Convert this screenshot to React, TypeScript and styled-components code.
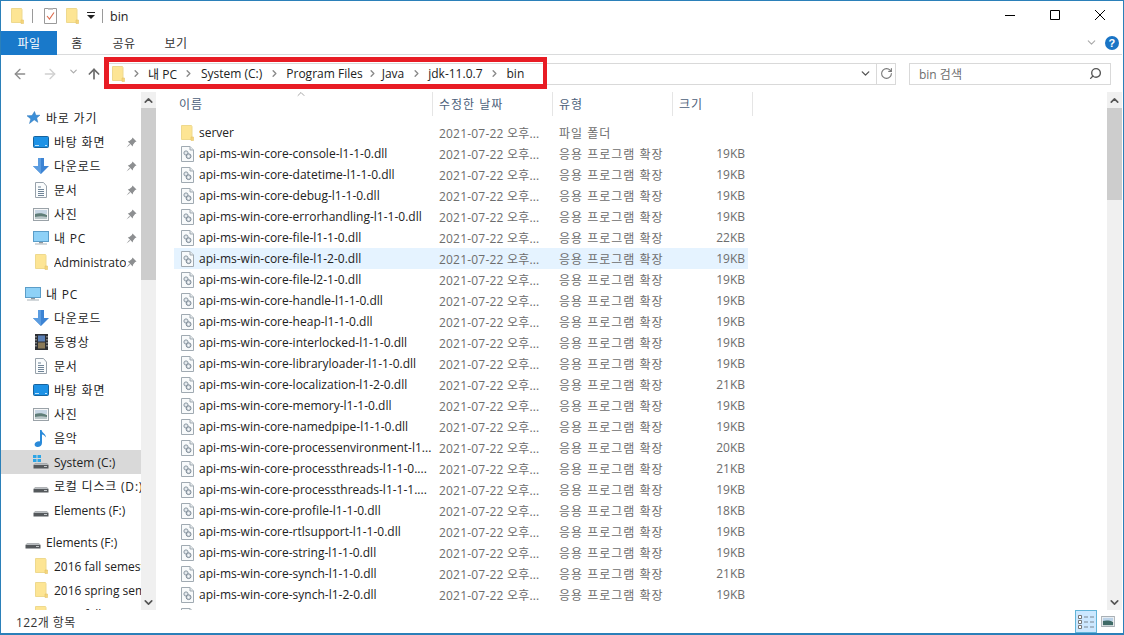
import React from "react";
import styled, { createGlobalStyle } from "styled-components";
import { ArrowLeft, ArrowRight, ArrowUp, ChevronDown, ChevronRight, ChevronUp, RotateCw, Search } from "lucide-react";

const GlobalStyle = createGlobalStyle`
  html, body { margin: 0; padding: 0; height: 635px; overflow: hidden; background: #fff; }
  body { font-family: "Open Sans", "Noto Sans CJK KR", sans-serif; font-size: 12px; color: #1e1e1e; }
  * { box-sizing: border-box; }
`;

const Window = styled.div`
  width: 1124px;
  height: 635px;
  display: flex;
  flex-direction: column;
  border: 1px solid #2b80b9;
  border-bottom-width: 2px;
  padding-right: 1px;
  background: #fff;
`;

/* title bar */
const TitleBar = styled.div`
  height: 30px;
  flex: none;
  display: flex;
  align-items: center;
  padding-left: 10px;
`;
const QuickSlot = styled.div<{ $w: number }>`
  width: ${(p) => p.$w}px;
  flex: none;
  display: flex;
  align-items: center;
`;
const VBar = styled.div`
  width: 1px;
  height: 14px;
  background: #9a9a9a;
  flex: none;
`;
const TitleText = styled.span`
  margin-left: 7px;
  font-size: 12.5px;
  color: #222;
`;
const WinControls = styled.div`
  margin-left: auto;
  display: flex;
  align-items: center;
  margin-right: 17px;
  margin-bottom: 2px;
  gap: 35px;
`;

/* ribbon tabs */
const RibbonTabs = styled.div`
  height: 24px;
  flex: none;
  display: flex;
  align-items: stretch;
  border-bottom: 1px solid #dadbdc;
  position: relative;
  letter-spacing: 0.5px;
`;
const FileTab = styled.div`
  width: 56px;
  background: #1979ca;
  color: #fff;
  display: flex;
  align-items: center;
  justify-content: center;
  margin-bottom: -1px;
`;
const RibbonTab = styled.div<{ $w: number }>`
  width: ${(p) => p.$w}px;
  display: flex;
  align-items: center;
  justify-content: center;
  color: #333;
`;
const RibbonRight = styled.div`
  margin-left: auto;
  display: flex;
  align-items: center;
  gap: 7px;
  padding-right: 3px;
`;
const HelpBadge = styled.div`
  width: 14px;
  height: 14px;
  border-radius: 50%;
  background: #1a74c5;
  color: #fff;
  font: bold 11px/14px "Liberation Sans", sans-serif;
  text-align: center;
`;

/* address row */
const AddressRow = styled.div`
  height: 37px;
  flex: none;
  display: flex;
  align-items: center;
  position: relative;
  padding-right: 11px;
`;
const NavSlot = styled.div<{ $w: number; $c: string }>`
  width: ${(p) => p.$w}px;
  flex: none;
  display: flex;
  justify-content: center;
  color: ${(p) => p.$c};
`;
const NavGroup = styled.div`
  width: 103px;
  flex: none;
  display: flex;
  padding-left: 4px;
`;
const AddressBox = styled.div`
  width: 792px;
  height: 22px;
  flex: none;
  border: 1px solid #d9d9d9;
  display: flex;
  align-items: center;
  padding-left: 7px;
`;
const Crumbs = styled.div`
  flex: 1;
  display: flex;
  align-items: center;
`;
const CrumbSep = styled.span<{ $w: number }>`
  width: ${(p) => p.$w}px;
  flex: none;
  display: flex;
  justify-content: center;
  color: #8a8a8a;
`;
const Crumb = styled.span`
  white-space: nowrap;
  color: #222;
`;
const DropBtn = styled.div`
  width: 17px;
  height: 100%;
  display: flex;
  align-items: center;
  justify-content: center;
  padding-right: 4px;
  color: #555;
`;
const RefreshBtn = styled.div`
  width: 19px;
  height: 100%;
  display: flex;
  align-items: center;
  justify-content: center;
  border-left: 1px solid #d9d9d9;
  color: #777;
`;
const SearchBox = styled.div`
  margin-left: 13px;
  flex: 1;
  height: 22px;
  border: 1px solid #d9d9d9;
  display: flex;
  align-items: center;
  padding: 0 8px 0 9px;
  color: #6d6d6d;
  justify-content: space-between;
`;
const MirroredSearch = styled(Search)`
  transform: scaleX(-1);
  color: #555;
`;
const RedFrame = styled.div`
  position: absolute;
  left: 103px;
  top: 2px;
  width: 443px;
  height: 32px;
  border: 5px solid #e81c24;
  border-right-width: 4px;
  pointer-events: none;
`;

/* main */
const Main = styled.div`
  flex: 1;
  min-height: 0;
  display: flex;
`;
const Sidebar = styled.nav`
  width: 140px;
  flex: none;
  overflow: hidden;
  padding-top: 14px;
`;
const NavGroupBlock = styled.div`
  margin-bottom: 8px;
`;
const NavRow = styled.div<{ $indent: number; $selected?: boolean }>`
  height: 24px;
  display: flex;
  align-items: center;
  padding-left: ${(p) => p.$indent}px;
  background: ${(p) => (p.$selected ? "#d9d9d9" : "transparent")};
`;
const NavIcon = styled.span`
  width: 16px;
  height: 16px;
  flex: none;
  display: flex;
  align-items: center;
  justify-content: center;
  margin-right: 5px;
`;
const NavLabel = styled.span<{ $ko?: boolean }>`
  flex: 1;
  min-width: 0;
  overflow: hidden;
  white-space: nowrap;
  color: #222;
  letter-spacing: ${(p) => (p.$ko ? "0.8px" : "0")};
`;
const PinSlot = styled.span`
  width: 13px;
  flex: none;
  display: flex;
  margin-right: 2px;
`;

const ScrollTrack = styled.div`
  width: 15px;
  flex: none;
  display: flex;
  flex-direction: column;
  background: #f0f0f0;
`;
const ScrollArrow = styled.div`
  height: 16px;
  flex: none;
  display: flex;
  align-items: center;
  justify-content: center;
  color: #555;
`;
const ScrollThumb = styled.div<{ $h: number }>`
  height: ${(p) => p.$h}px;
  flex: none;
  background: #cdcdcd;
`;
const ScrollRest = styled.div`
  flex: 1;
`;

const FileArea = styled.div`
  flex: 1;
  min-width: 0;
  overflow: hidden;
  position: relative;
  padding-left: 18px;
`;
const SortCaret = styled.div`
  position: absolute;
  left: 139px;
  top: -5px;
  color: #8a8a8a;
`;
const HeaderRow = styled.div`
  display: grid;
  grid-template-columns: 259px 120px 120px 80px;
  height: 24px;
  margin-bottom: 6px;
  width: 579px;
`;
const HeaderCell = styled.div<{ $pad: number }>`
  border-right: 1px solid #e5e5e5;
  display: flex;
  align-items: center;
  padding-left: ${(p) => p.$pad}px;
  color: #4c607a;
  letter-spacing: 1px;
`;
const FileRow = styled.div<{ $hover?: boolean }>`
  display: grid;
  grid-template-columns: 259px 120px 120px 75px;
  width: 574px;
  height: 21px;
  align-items: center;
  background: ${(p) => (p.$hover ? "#e5f3ff" : "transparent")};
`;
const NameCell = styled.div`
  display: flex;
  align-items: center;
  padding-left: 7px;
  min-width: 0;
  white-space: nowrap;
  overflow: hidden;
  color: #222;
`;
const FileIconSlot = styled.span`
  width: 18px;
  flex: none;
  display: flex;
`;
const MetaCell = styled.div<{ $right?: boolean; $spacing?: number }>`
  color: #6d6d6d;
  white-space: nowrap;
  overflow: hidden;
  padding-left: ${(p) => (p.$right ? 0 : 6)}px;
  padding-right: ${(p) => (p.$right ? 3 : 0)}px;
  text-align: ${(p) => (p.$right ? "right" : "left")};
  letter-spacing: ${(p) => p.$spacing ?? 0}px;
`;

/* status */
const StatusBar = styled.div`
  height: 23px;
  flex: none;
  display: flex;
  align-items: center;
  padding-left: 15px;
  color: #333;
`;
const StatusText = styled.span`
  letter-spacing: 0.4px;
`;
const ViewButtons = styled.div`
  margin-left: auto;
  display: flex;
  align-items: center;
  height: 100%;
  margin-right: 3px;
`;
const ViewBtn = styled.div<{ $on?: boolean }>`
  width: 22px;
  height: 100%;
  display: flex;
  align-items: center;
  justify-content: center;
  background: ${(p) => (p.$on ? "#cce8ff" : "transparent")};
  border: 1px solid ${(p) => (p.$on ? "#62b4d8" : "transparent")};
`;

/* icons */
const FolderIcon = ({ w = 13, h = 16 }: { w?: number; h?: number }) => (
  <svg width={w} height={h} viewBox="0 0 13 16">
    <path d="M.5.5h10l.5 1v13H.5z" fill="#fde594" stroke="#eed98e" />
    <path d="M10 12h2.5v3.5H10z" fill="#f5d67c" stroke="#e6c56a" strokeWidth=".6" />
  </svg>
);
const TaskIcon = () => (
  <svg width="13" height="16" viewBox="0 0 13 16">
    <path d="M.5.5h12v15H.5z" fill="#fff" stroke="#9a9a9a" />
    <path d="M3 8l2.5 3L10 4.5" fill="none" stroke="#dc6a4c" strokeWidth="1.1" />
    <path d="M4 .5h5v1.5H4z" fill="#c9c9c9" />
  </svg>
);
const DllIcon = () => (
  <svg width="13" height="16" viewBox="0 0 13 16">
    <path d="M.5.5H9L12.5 4v11.5H.5z" fill="#f8fafb" stroke="#a0aab2" />
    <path d="M9 .5V4h3.5" fill="#e5e9ec" stroke="#a0aab2" />
    <circle cx="5" cy="7" r="2.1" fill="#e4e9ed" stroke="#8a97a2" />
    <circle cx="7.6" cy="10.2" r="2.4" fill="#d4dbe1" stroke="#7c8995" />
    <circle cx="7.6" cy="10.2" r=".8" fill="#fff" />
  </svg>
);
const StarIcon = () => (
  <svg width="16" height="16" viewBox="0 0 16 16">
    <path d="M9.5 1.5l1.4 3.8 4-.1-3.2 2.7 1.1 4.4-3.6-2.5L4.5 13.5l1.3-4.6L2 5.8l5-.2z" fill="#3b8fd8" stroke="#2a75b8" strokeWidth=".5" />
  </svg>
);
const DesktopIcon = () => (
  <svg width="16" height="12" viewBox="0 0 16 12">
    <rect x=".5" y=".5" width="15" height="11" rx="1" fill="#1d92e6" stroke="#17639d" />
    <path d="M2 9.5h4M12 9.5h2" stroke="#bfe3fa" />
  </svg>
);
const DownloadIcon = () => (
  <svg width="16" height="16" viewBox="0 0 16 16">
    <path d="M5 0h6v8h5l-8 8-8-8h5z" fill="#3d84d4" />
    <path d="M5 0h3v16L0 8h5z" fill="#5b9ce0" />
  </svg>
);
const DocIcon = () => (
  <svg width="12" height="16" viewBox="0 0 12 16">
    <path d="M.5.5h8L11.5 4v11.5H.5z" fill="#fafcfd" stroke="#98a2ab" />
    <path d="M3 5h3M3 7.5h6M3 9.5h6M3 11.5h6M3 13.5h6" stroke="#6f8497" />
  </svg>
);
const PictureIcon = () => (
  <svg width="16" height="13" viewBox="0 0 16 13">
    <rect x=".5" y=".5" width="15" height="12" fill="#f6f7f8" stroke="#9aa2a8" />
    <path d="M2 2h12v4H2z" fill="#c7d6e4" />
    <path d="M2 6c3-1 8-1 12 1v4H2z" fill="#5f7d78" />
    <path d="M2 9c4-1 8-1 12 0v2H2z" fill="#b9c6c8" />
  </svg>
);
const PcIcon = () => (
  <svg width="16" height="14" viewBox="0 0 16 14">
    <rect x=".5" y=".5" width="15" height="10" fill="#8ed1f7" stroke="#5b9dc8" />
    <path d="M6 11h4v1.3H6z" fill="#8d979e" />
    <path d="M2 12.5h12v1H2z" fill="#a7b0b6" />
  </svg>
);
const VideoIcon = () => (
  <svg width="13" height="16" viewBox="0 0 13 16">
    <rect width="13" height="16" fill="#2c2f33" />
    <rect x="3" y="1.5" width="7" height="6" fill="#5a7fb5" />
    <rect x="3" y="8.5" width="7" height="6" fill="#8a7a58" />
    <path d="M1 2v12M12 2v12" stroke="#c9c9c9" strokeDasharray="1.5 1.5" />
  </svg>
);
const MusicIcon = () => (
  <svg width="14" height="17" viewBox="0 0 14 17">
    <path d="M6 0h1.6c.4 3 4.4 3.6 4.4 7.6-.8-2-2.6-3-4-3.2V13c0 2.4-2.2 4-4.4 4C1.6 17 .6 16 .6 14.6.6 12.6 3 11 6 11.4z" fill="#2a8ad9" />
  </svg>
);
const DriveIcon = ({ win }: { win?: boolean }) => (
  <svg width="16" height="14" viewBox="0 0 16 14">
    {win && (
      <g fill="#2da5e6">
        <rect x="0" y="0" width="3.5" height="3" />
        <rect x="4.5" y="0" width="3.5" height="3" />
        <rect x="0" y="4" width="3.5" height="3" />
        <rect x="4.5" y="4" width="3.5" height="3" />
      </g>
    )}
    <path d="M2 8.5h12l1.5 1.5v3.5H.5V10z" fill="#55595c" />
    <path d="M2 8.5h12l1.5 1.5H.5z" fill="#b8bcbf" />
    <path d="M11 11.5h3" stroke="#c4c8ca" />
  </svg>
);
const PinIcon = () => (
  <svg width="11" height="11" viewBox="0 0 11 11">
    <path d="M6.5.5l4 4-1.4.6L7 7.8l-.3 1.6L1.8 4.4l1.6-.3 2.5-2.2z" fill="#8d8f91" />
    <path d="M3.3 7l-2.8 3.5L4 7.7z" fill="#8d8f91" />
  </svg>
);
const MinIcon = () => (
  <svg width="10" height="10" viewBox="0 0 10 10">
    <path d="M0 5.5h10" stroke="#000" />
  </svg>
);
const MaxIcon = () => (
  <svg width="10" height="10" viewBox="0 0 10 10">
    <path d="M.5.5h9v9h-9z" fill="none" stroke="#000" />
  </svg>
);
const CloseIcon = () => (
  <svg width="10" height="10" viewBox="0 0 10 10">
    <path d="M0 0l10 10M10 0L0 10" stroke="#000" />
  </svg>
);
const QuickDrop = () => (
  <svg width="8" height="8" viewBox="0 0 8 8">
    <path d="M0 0h8v1H0zM0 3h8L4 7z" fill="#222" />
  </svg>
);
const DetailsViewIcon = () => (
  <svg width="16" height="14" viewBox="0 0 16 14">
    <path d="M.5.5h3v3h-3zM.5 5.5h3v3h-3zM.5 10.5h3v3h-3z" fill="#fff" stroke="#777" />
    <path d="M6 2h4M12 2h4M6 7h4M12 7h4M6 12h4M12 12h4" stroke="#7a8792" />
  </svg>
);
const LargeViewIcon = () => (
  <svg width="14" height="11" viewBox="0 0 16 13">
    <rect x=".5" y=".5" width="15" height="12" fill="#f6f7f8" stroke="#9aa2a8" />
    <path d="M2 2h12v4H2z" fill="#bcd3e8" />
    <path d="M2 6c3-1 8-1 12 1v4H2z" fill="#3f6a66" />
  </svg>
);

type NavItem = { label: string; icon: React.ReactNode; pin?: boolean; selected?: boolean };

const quickAccess: NavItem[] = [
  { label: "바탕 화면", icon: <DesktopIcon />, pin: true },
  { label: "다운로드", icon: <DownloadIcon />, pin: true },
  { label: "문서", icon: <DocIcon />, pin: true },
  { label: "사진", icon: <PictureIcon />, pin: true },
  { label: "내 PC", icon: <PcIcon />, pin: true },
  { label: "Administrator", icon: <FolderIcon />, pin: true },
];
const thisPc: NavItem[] = [
  { label: "다운로드", icon: <DownloadIcon /> },
  { label: "동영상", icon: <VideoIcon /> },
  { label: "문서", icon: <DocIcon /> },
  { label: "바탕 화면", icon: <DesktopIcon /> },
  { label: "사진", icon: <PictureIcon /> },
  { label: "음악", icon: <MusicIcon /> },
  { label: "System (C:)", icon: <DriveIcon win />, selected: true },
  { label: "로컬 디스크 (D:)", icon: <DriveIcon /> },
  { label: "Elements (F:)", icon: <DriveIcon /> },
];
const elements: NavItem[] = [
  { label: "2016 fall semester", icon: <FolderIcon /> },
  { label: "2016 spring semester", icon: <FolderIcon /> },
  { label: "2016 fall", icon: <FolderIcon /> },
];

const files: [string, string][] = [
  ["console-l1-1-0.dll", "19KB"],
  ["datetime-l1-1-0.dll", "19KB"],
  ["debug-l1-1-0.dll", "19KB"],
  ["errorhandling-l1-1-0.dll", "19KB"],
  ["file-l1-1-0.dll", "22KB"],
  ["file-l1-2-0.dll", "19KB"],
  ["file-l2-1-0.dll", "19KB"],
  ["handle-l1-1-0.dll", "19KB"],
  ["heap-l1-1-0.dll", "19KB"],
  ["interlocked-l1-1-0.dll", "19KB"],
  ["libraryloader-l1-1-0.dll", "19KB"],
  ["localization-l1-2-0.dll", "21KB"],
  ["memory-l1-1-0.dll", "19KB"],
  ["namedpipe-l1-1-0.dll", "19KB"],
  ["processenvironment-l1...", "20KB"],
  ["processthreads-l1-1-0....", "21KB"],
  ["processthreads-l1-1-1....", "19KB"],
  ["profile-l1-1-0.dll", "18KB"],
  ["rtlsupport-l1-1-0.dll", "19KB"],
  ["string-l1-1-0.dll", "19KB"],
  ["synch-l1-1-0.dll", "21KB"],
  ["synch-l1-2-0.dll", "19KB"],
  ["sysinfo-l1-1-0.dll", "19KB"],
];

const DATE = "2021-07-22 오후...";
const HANGUL = /[가-힣]/;

const crumbs: [string, number][] = [
  ["내 PC", 24],
  ["System (C:)", 24],
  ["Program Files", 19],
  ["Java", 24],
  ["jdk-11.0.7", 24],
  ["bin", 0],
];

const Scroller = ({ thumb }: { thumb: number }) => (
  <ScrollTrack>
    <ScrollArrow>
      <ChevronUp size={13} strokeWidth={3} />
    </ScrollArrow>
    <ScrollThumb $h={thumb} />
    <ScrollRest />
    <ScrollArrow>
      <ChevronDown size={13} strokeWidth={3} />
    </ScrollArrow>
  </ScrollTrack>
);

const NavRows = ({ items }: { items: NavItem[] }) => (
  <>
    {items.map((item) => (
      <NavRow key={item.label} $indent={32} $selected={item.selected}>
        <NavIcon>{item.icon}</NavIcon>
        <NavLabel $ko={HANGUL.test(item.label)}>{item.label}</NavLabel>
        {item.pin && (
          <PinSlot>
            <PinIcon />
          </PinSlot>
        )}
      </NavRow>
    ))}
  </>
);

export default function App() {
  return (
    <>
      <GlobalStyle />
      <Window>
        <TitleBar>
          <QuickSlot $w={21}>
            <FolderIcon />
          </QuickSlot>
          <VBar />
          <QuickSlot $w={11} />
          <QuickSlot $w={22}>
            <TaskIcon />
          </QuickSlot>
          <QuickSlot $w={21}>
            <FolderIcon />
          </QuickSlot>
          <QuickSlot $w={15}>
            <QuickDrop />
          </QuickSlot>
          <VBar />
          <TitleText>bin</TitleText>
          <WinControls>
            <MinIcon />
            <MaxIcon />
            <CloseIcon />
          </WinControls>
        </TitleBar>

        <RibbonTabs>
          <FileTab>파일</FileTab>
          <RibbonTab $w={40}>홈</RibbonTab>
          <RibbonTab $w={54}>공유</RibbonTab>
          <RibbonTab $w={50}>보기</RibbonTab>
          <RibbonRight>
            <ChevronDown size={13} color="#aaa" />
            <HelpBadge>?</HelpBadge>
          </RibbonRight>
        </RibbonTabs>

        <AddressRow>
          <NavGroup>
            <NavSlot $w={30} $c="#8c8c8c">
              <ArrowLeft size={16} strokeWidth={2} />
            </NavSlot>
            <NavSlot $w={30} $c="#d0d0d0">
              <ArrowRight size={16} strokeWidth={2} />
            </NavSlot>
            <NavSlot $w={16} $c="#aaa">
              <ChevronDown size={11} strokeWidth={2.5} />
            </NavSlot>
            <NavSlot $w={26} $c="#6a6a6a">
              <ArrowUp size={16} strokeWidth={2.5} />
            </NavSlot>
          </NavGroup>
          <AddressBox>
            <Crumbs>
              <FolderIcon />
              <CrumbSep $w={23}>
                <ChevronRight size={11} strokeWidth={3} />
              </CrumbSep>
              {crumbs.map(([label, sep]) => (
                <React.Fragment key={label}>
                  <Crumb>{label}</Crumb>
                  {sep > 0 && (
                    <CrumbSep $w={sep}>
                      <ChevronRight size={11} strokeWidth={3} />
                    </CrumbSep>
                  )}
                </React.Fragment>
              ))}
            </Crumbs>
            <DropBtn>
              <ChevronDown size={13} strokeWidth={2.5} />
            </DropBtn>
            <RefreshBtn>
              <RotateCw size={13} strokeWidth={2} />
            </RefreshBtn>
          </AddressBox>
          <SearchBox>
            <span>bin 검색</span>
            <MirroredSearch size={13} strokeWidth={2.5} />
          </SearchBox>
          <RedFrame />
        </AddressRow>

        <Main>
          <Sidebar>
            <NavGroupBlock>
              <NavRow $indent={24}>
                <NavIcon>
                  <StarIcon />
                </NavIcon>
                <NavLabel $ko>바로 가기</NavLabel>
              </NavRow>
              <NavRows items={quickAccess} />
            </NavGroupBlock>
            <NavGroupBlock>
              <NavRow $indent={24}>
                <NavIcon>
                  <PcIcon />
                </NavIcon>
                <NavLabel $ko>내 PC</NavLabel>
              </NavRow>
              <NavRows items={thisPc} />
            </NavGroupBlock>
            <NavGroupBlock>
              <NavRow $indent={24}>
                <NavIcon>
                  <DriveIcon />
                </NavIcon>
                <NavLabel>Elements (F:)</NavLabel>
              </NavRow>
              <NavRows items={elements} />
            </NavGroupBlock>
          </Sidebar>
          <Scroller thumb={172} />

          <FileArea>
            <SortCaret>
              <ChevronUp size={12} strokeWidth={1.5} />
            </SortCaret>
            <HeaderRow>
              <HeaderCell $pad={5}>이름</HeaderCell>
              <HeaderCell $pad={6}>수정한 날짜</HeaderCell>
              <HeaderCell $pad={6}>유형</HeaderCell>
              <HeaderCell $pad={6}>크기</HeaderCell>
            </HeaderRow>
            <FileRow>
              <NameCell>
                <FileIconSlot>
                  <FolderIcon />
                </FileIconSlot>
                server
              </NameCell>
              <MetaCell $spacing={0.2}>{DATE}</MetaCell>
              <MetaCell $spacing={1}>파일 폴더</MetaCell>
              <MetaCell $right />
            </FileRow>
            {files.map(([name, size]) => (
              <FileRow key={name} $hover={name === "file-l1-2-0.dll"}>
                <NameCell>
                  <FileIconSlot>
                    <DllIcon />
                  </FileIconSlot>
                  api-ms-win-core-{name}
                </NameCell>
                <MetaCell $spacing={0.2}>{DATE}</MetaCell>
                <MetaCell $spacing={1}>응용 프로그램 확장</MetaCell>
                <MetaCell $right>{size}</MetaCell>
              </FileRow>
            ))}
          </FileArea>
          <Scroller thumb={92} />
        </Main>

        <StatusBar>
          <StatusText>122개 항목</StatusText>
          <ViewButtons>
            <ViewBtn $on>
              <DetailsViewIcon />
            </ViewBtn>
            <ViewBtn>
              <LargeViewIcon />
            </ViewBtn>
          </ViewButtons>
        </StatusBar>
      </Window>
    </>
  );
}
